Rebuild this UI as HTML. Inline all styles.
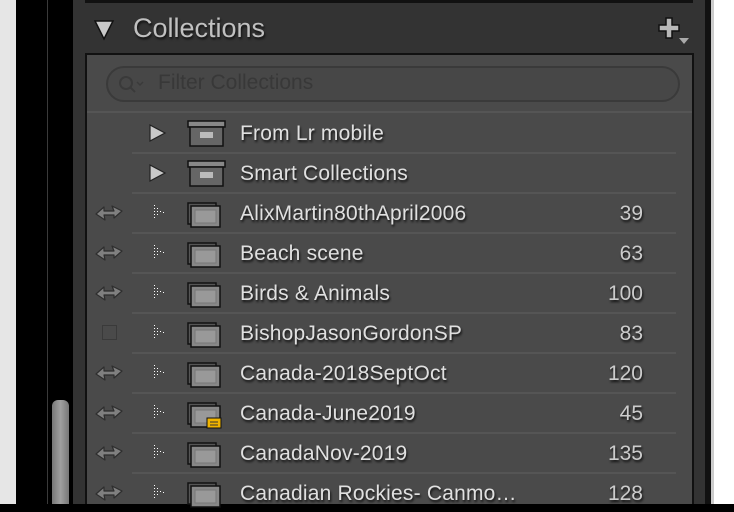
<!DOCTYPE html>
<html><head><style>
body{margin:0;width:734px;height:504px;overflow:hidden;background:#000;position:relative;font-family:"Liberation Sans",sans-serif}
div{position:absolute;box-sizing:border-box}
.t{left:240px;font-size:21px;color:#e0e0e0;text-shadow:1px 2px 2px #111;white-space:nowrap;letter-spacing:0.2px}
.c{right:91px;font-size:21px;color:#ccc;text-shadow:1px 2px 2px #111;text-align:right}
.sep{left:132px;width:544px;height:2px;background:#555}
</style></head><body>
<div style="left:0;top:0;width:16px;height:504px;background:#e6e6e6"></div>
<div style="left:47px;top:0;width:1px;height:504px;background:#3a3a3a"></div>
<div style="left:52px;top:400px;width:17px;height:104px;background:linear-gradient(90deg,#777,#a0a0a0 50%,#777);border-radius:6px 6px 0 0"></div>
<div style="left:73px;top:0;width:633px;height:504px;background:#333"></div>
<div style="left:85px;top:0;width:608px;height:3px;background:#111"></div>
<div style="left:85px;top:53px;width:609px;height:451px;background:#4a4a4a;border:2px solid #111;border-bottom:none"></div>
<div style="left:705px;top:0;width:6px;height:504px;background:#111"></div>
<div style="left:711px;top:0;width:23px;height:504px;background:#fff;border-left:3px solid #ccc"></div>
<svg style="position:absolute;left:93px;top:19px" width="22" height="22"><polygon points="2,2 20,2 11,20" fill="#c8c8c8" stroke="#111" stroke-width="1.5"/></svg>
<div style="left:133px;top:13px;font-size:27px;color:#c0c0c0;text-shadow:1px 2px 2px #111">Collections</div>
<svg style="position:absolute;left:657px;top:16px" width="34" height="30"><path d="M9 2h6v7h7v6h-7v7h-6v-7h-7v-6h7z" fill="#b8b8b8" stroke="#111" stroke-width="1.5"/><polygon points="22,22 32,22 27,28" fill="#aaa"/></svg>
<div style="left:106px;top:66px;width:574px;height:36px;border:2px solid #3a3a3a;border-radius:18px;background:#474747"></div>
<svg style="position:absolute;left:117px;top:73px" width="40" height="22"><circle cx="9" cy="10" r="6" fill="none" stroke="#3a3a3a" stroke-width="2"/><line x1="13" y1="14" x2="18" y2="19" stroke="#3a3a3a" stroke-width="2"/><path d="M20 9l3 3 3-3" fill="none" stroke="#3a3a3a" stroke-width="1.5"/></svg>
<div style="left:158px;top:71px;font-size:21px;color:#383838">Filter Collections</div>
<div style="left:87px;top:111px;width:605px;height:2px;background:#555"></div>
<div id="rows"></div>
<script>
var r=[["From Lr mobile","",0],["Smart Collections","",0],["AlixMartin80thApril2006","39",1],["Beach scene","63",1],["Birds & Animals","100",1],["BishopJasonGordonSP","83",2],["Canada-2018SeptOct","120",1],["Canada-June2019","45",3],["CanadaNov-2019","135",1],["Canadian Rockies- Canmo…","128",1]];
var h="";
r.forEach(function(x,i){var y=113+i*40;
if(i>0)h+='<div class="sep" style="top:'+(y-1)+'px"></div>';
if(x[2]==0){h+='<svg style="position:absolute;left:148px;top:'+(y+10)+'px" width="20" height="20"><polygon points="2,2 17,10 2,18" fill="#c8c8c8" stroke="#222" stroke-width="1.2"/></svg>';
h+='<svg style="position:absolute;left:187px;top:'+(y+7)+'px" width="40" height="28"><rect x="1" y="1" width="37" height="6" fill="#888" stroke="#111" stroke-width="1.5"/><rect x="3" y="7" width="33" height="19" fill="#666" stroke="#111" stroke-width="1.5"/><rect x="13" y="12" width="13" height="6" fill="#bbb"/></svg>';}
else{if(x[2]==2)h+='<div style="left:102px;top:'+(y+12)+'px;width:15px;height:15px;border:1px solid #3a3a3a"></div>';
else h+='<svg style="position:absolute;left:95px;top:'+(y+11)+'px" width="30" height="18"><polygon points="1,10 9,3 9,7 19,7 17,2 27,7 19,14 19,11 9,11 10,16" fill="#808080" stroke="#2e2e2e" stroke-width="1.2" stroke-linejoin="round"/></svg>';
h+='<svg style="position:absolute;left:153px;top:'+(y+12)+'px" width="16" height="16">';
for(var k=0;k<5;k++)h+='<rect x="1" y="'+(k*3)+'" width="1" height="1" fill="#fff"/>';
for(var k=0;k<3;k++)h+='<rect x="4" y="'+(3+k*3)+'" width="1" height="1" fill="#fff"/>';
h+='<rect x="7" y="6" width="1" height="1" fill="#fff"/><rect x="10" y="7" width="1" height="1" fill="#fff"/></svg>';
h+='<svg style="position:absolute;left:187px;top:'+(y+9)+'px" width="40" height="30"><rect x="1" y="1" width="28" height="21" fill="#555" stroke="#111" stroke-width="1.5"/><rect x="4" y="4" width="29" height="21" fill="#888" stroke="#111" stroke-width="1.5"/><rect x="8" y="8" width="21" height="13" fill="#999" stroke="#777"/>'+(x[2]==3?'<rect x="20" y="16" width="14" height="10" fill="#f0b400" stroke="#111"/><line x1="23" y1="20" x2="31" y2="20" stroke="#333"/><line x1="23" y1="23" x2="31" y2="23" stroke="#333"/>':'')+'</svg>';}
h+='<div class="t" style="top:'+(y+9)+'px">'+x[0].replace("&","&amp;")+'</div>';
if(x[1])h+='<div class="c" style="top:'+(y+9)+'px">'+x[1]+'</div>';});
document.getElementById("rows").outerHTML=h;
</script>
</body></html>
